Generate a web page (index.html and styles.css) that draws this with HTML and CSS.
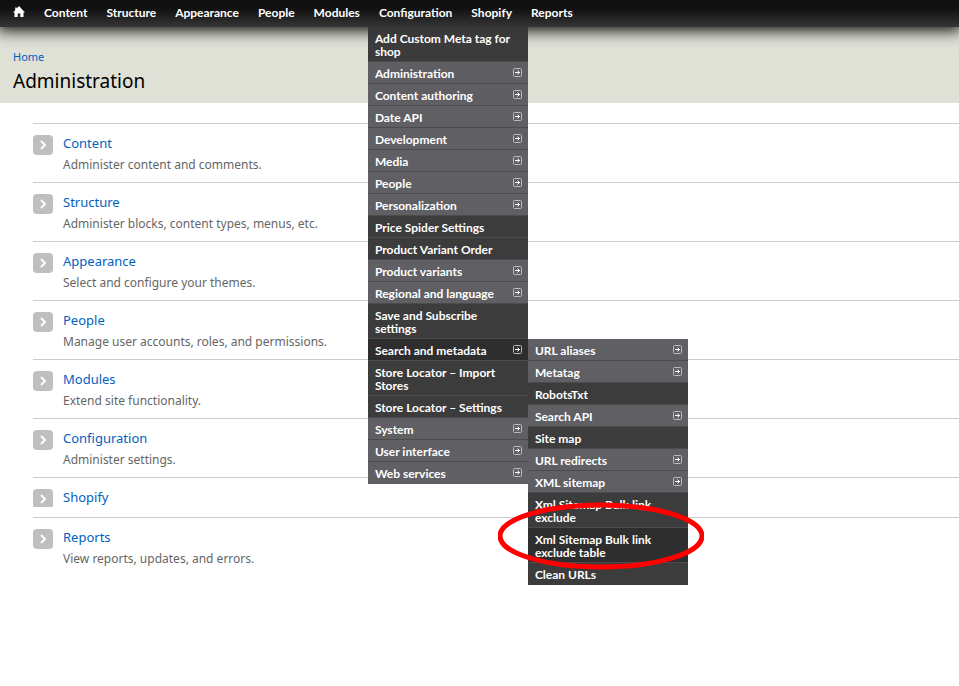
FILE: index.html
```
<!DOCTYPE html>
<html lang="en">
<head>
  <meta charset="utf-8">
  <title>Administration</title>
  <meta name="viewport" content="width=device-width, initial-scale=1">
  <link rel="stylesheet" href="styles.css">
</head>
<body>
  <nav class="admin-menu">
    <ul class="menu-bar">
      <li><a class="home" href="#" aria-label="Home"><svg width="12" height="12" viewBox="0 0 12 12"><path d="M6 0L12 6.5H10.5V11H7.3V7.5H4.7V11H1.5V6.5H0L2.2 4.2V1.5H3.8V2.5Z" fill="#fff"/></svg></a></li>
      <li><a href="#">Content</a></li>
      <li><a href="#">Structure</a></li>
      <li><a href="#">Appearance</a></li>
      <li><a href="#">People</a></li>
      <li><a href="#">Modules</a></li>
      <li>
        <a href="#">Configuration</a>
        <ul class="dropdown">
          <li><a href="#">Add Custom Meta tag for shop</a></li>
          <li class="expandable"><a href="#">Administration</a></li>
          <li class="expandable"><a href="#">Content authoring</a></li>
          <li class="expandable"><a href="#">Date API</a></li>
          <li class="expandable"><a href="#">Development</a></li>
          <li class="expandable"><a href="#">Media</a></li>
          <li class="expandable"><a href="#">People</a></li>
          <li class="expandable"><a href="#">Personalization</a></li>
          <li><a href="#">Price Spider Settings</a></li>
          <li><a href="#">Product Variant Order</a></li>
          <li class="expandable"><a href="#">Product variants</a></li>
          <li class="expandable"><a href="#">Regional and language</a></li>
          <li><a href="#">Save and Subscribe settings</a></li>
          <li class="expandable active">
            <a href="#">Search and metadata</a>
            <ul class="dropdown submenu">
              <li class="expandable"><a href="#">URL aliases</a></li>
              <li class="expandable"><a href="#">Metatag</a></li>
              <li><a href="#">RobotsTxt</a></li>
              <li class="expandable"><a href="#">Search API</a></li>
              <li><a href="#">Site map</a></li>
              <li class="expandable"><a href="#">URL redirects</a></li>
              <li class="expandable"><a href="#">XML sitemap</a></li>
              <li><a href="#">Xml Sitemap Bulk link exclude</a></li>
              <li class="active">
                <a href="#">Xml Sitemap Bulk link exclude table</a>
                <svg class="marker" width="206" height="68" viewBox="0 0 206 68"><ellipse cx="103" cy="34" rx="101" ry="31" fill="none" stroke="#f00" stroke-width="5"/></svg>
              </li>
              <li><a href="#">Clean URLs</a></li>
            </ul>
          </li>
          <li><a href="#">Store Locator – Import Stores</a></li>
          <li><a href="#">Store Locator – Settings</a></li>
          <li class="expandable"><a href="#">System</a></li>
          <li class="expandable"><a href="#">User interface</a></li>
          <li class="expandable"><a href="#">Web services</a></li>
        </ul>
      </li>
      <li><a href="#">Shopify</a></li>
      <li><a href="#">Reports</a></li>
    </ul>
  </nav>

  <header class="branding">
    <a class="breadcrumb" href="#">Home</a>
    <h1>Administration</h1>
  </header>

  <main>
    <ul class="admin-list">
      <li><a href="#">Content</a><p>Administer content and comments.</p></li>
      <li><a href="#">Structure</a><p>Administer blocks, content types, menus, etc.</p></li>
      <li><a href="#">Appearance</a><p>Select and configure your themes.</p></li>
      <li><a href="#">People</a><p>Manage user accounts, roles, and permissions.</p></li>
      <li><a href="#">Modules</a><p>Extend site functionality.</p></li>
      <li><a href="#">Configuration</a><p>Administer settings.</p></li>
      <li><a href="#">Shopify</a></li>
      <li><a href="#">Reports</a><p>View reports, updates, and errors.</p></li>
    </ul>
  </main>
</body>
</html>
```
FILE: styles.css
```
body {
  margin: 0;
  background: #fff;
  color: #000;
  font-family: "Noto Sans", "Open Sans", sans-serif;
}
ul {
  margin: 0;
  padding: 0;
  list-style: none;
}
a {
  color: #0062bf;
  text-decoration: none;
}

/* top menu */
.admin-menu {
  position: relative;
  z-index: 2;
  background: linear-gradient(#101010 8px, #353535);
  box-shadow: 0 0 16px 3px #000;
  font-family: "Lato", sans-serif;
  font-size: 12px;
  font-weight: bold;
  line-height: 13px;
}
.admin-menu a {
  display: block;
  color: #fff;
}
.menu-bar {
  display: flex;
  padding-left: 3px;
}
.menu-bar > li {
  position: relative;
}
.menu-bar > li > a {
  padding: 6px 9px 8px 10px;
}
.home svg {
  display: block;
}

.dropdown {
  position: absolute;
  top: 27px;
  left: -1px;
  width: 160px;
}
.dropdown li {
  position: relative;
  box-sizing: border-box;
  border-bottom: 1px solid #4b4b4b;
  background: rgba(54, 54, 54, 0.97);
}
.dropdown li a {
  padding: 5px 24px 3px 7px;
}
.dropdown li:not(.expandable) > a {
  padding-right: 7px;
}
.dropdown .expandable {
  background: rgba(91, 90, 95, 0.97);
}
.dropdown .active {
  z-index: 1;
  background: rgba(42, 42, 42, 0.98);
}
.dropdown > li:last-child {
  border-bottom-color: transparent;
}
.expandable > a {
  background: url("data:image/svg+xml,%3Csvg xmlns='http://www.w3.org/2000/svg' width='9' height='9'%3E%3Crect x='.5' y='.5' width='8' height='8' rx='1' fill='none' stroke='%23bbb'/%3E%3Cpath d='M2 4.5h5M4.5 2.5l2 2-2 2' fill='none' stroke='%23fff'/%3E%3C/svg%3E") no-repeat right 6px top 6px;
}
.dropdown .submenu {
  top: 0;
  left: 100%;
}
.marker {
  position: absolute;
  top: -26px;
  left: -30px;
  pointer-events: none;
}

/* page title */
.branding {
  padding: 23px 13px 9px;
  background: #dfe0d6;
}
.breadcrumb {
  display: block;
  font-size: 11px;
  line-height: 14px;
}
h1 {
  margin: 4px 0 0;
  font-size: 19px;
  font-weight: normal;
  line-height: 26px;
}

/* admin sections */
main {
  padding: 20px 0 20px 33px;
}
.admin-list li {
  padding: 11px 0 10px;
  border-top: 1px solid #ccc;
  background: url("data:image/svg+xml,%3Csvg xmlns='http://www.w3.org/2000/svg' width='20' height='20'%3E%3Crect width='20' height='20' rx='4' fill='%23bfbfbf'/%3E%3Cpath d='M8 6l4 4-4 4' fill='none' stroke='%23fff' stroke-width='2'/%3E%3C/svg%3E") no-repeat content-box;
}
.admin-list a {
  display: block;
  padding: 0 0 2px 30px;
  font-size: 13px;
  line-height: 16px;
}
.admin-list p {
  margin: 0;
  padding: 4px 0 0 30px;
  color: #666;
  font-size: 12px;
  line-height: 15px;
}
```
